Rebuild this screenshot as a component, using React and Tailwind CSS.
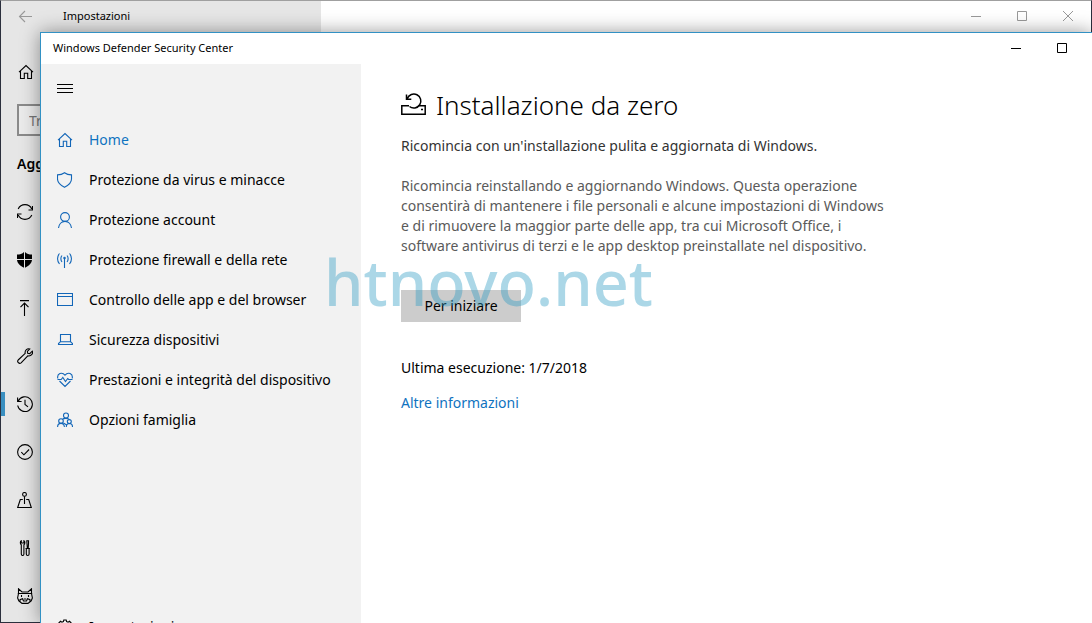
import { useState } from 'react';

const Icon = ({ size = 16, children }) => (
  <svg width={size} height={size} viewBox={`0 0 ${size} ${size}`} className="shrink-0" fill="none" stroke="currentColor" strokeWidth="1.1" aria-hidden="true">
    {children}
  </svg>
);

const HomeIcon = () => (
  <Icon>
    <path d="M1 8.2L8 1.5l7 6.7M2.5 7v7.5h3.8V9.2h3.4v5.3h3.8V7" />
  </Icon>
);

const railItems = [
  {
    label: 'Windows Update',
    icon: (
      <Icon>
        <path d="M1.2 5A7.5 7.5 0 0 1 14.8 5M14.8 11A7.5 7.5 0 0 1 1.2 11" />
        <path d="M15.5 2v4h-4M.5 14v-4h4" />
      </Icon>
    )
  },
  {
    label: 'Windows Defender',
    icon: (
      <Icon>
        <path
          fill="currentColor"
          stroke="none"
          d="M7 0v7H0V2.6C3 2.6 5.2 1.8 7 0zM8 0C9.8 1.8 12 2.6 15 2.6V7H8zM0 8h7v7.700C3.400 14 .4 11.500 0 8zM8 8h7c-.4 3.500-3.400 6-7 7.700z"
        />
      </Icon>
    )
  },
  {
    label: 'Backup',
    icon: (
      <Icon>
        <path d="M3 .6h9M7.500 3V16M3.500 7.200l4-4.200 4 4.200" />
      </Icon>
    )
  },
  {
    label: 'Risoluzione dei problemi',
    icon: (
      <Icon>
        <path d="M12.800 1C10.500 0 7.500 2 8.200 5.400L1.200 12c-1.600 1.900 1 4.400 2.900 2.800l6.700-7c3.300.8 5.500-2.200 4.500-4.700l-2.600 2.500-2-.3-.3-1.900z" />
      </Icon>
    )
  },
  {
    label: 'Ripristino',
    active: true,
    icon: (
      <Icon>
        <path d="M1.300 5A7.400 7.400 0 1 1 .7 9.500M.6 1.500v4h4M8 3.800v4.700l3 2.400" />
      </Icon>
    )
  },
  {
    label: 'Attivazione',
    icon: (
      <Icon>
        <circle cx="8" cy="8" r="7.4" />
        <path d="M4.300 8.200l2.600 2.600 5.200-5.300" />
      </Icon>
    )
  },
  {
    label: 'Trova il mio dispositivo',
    icon: (
      <Icon>
        <circle cx="7.5" cy="2.4" r="1.9" />
        <path d="M7.500 4.300V12M5.800 7.500H3.300L.7 15.500h13.600l-2.600-8H9.200" />
      </Icon>
    )
  },
  {
    label: 'Per sviluppatori',
    icon: (
      <Icon>
        <path d="M4.300.8C3 1.300 3 4 4.300 4.800v9.200c0 2 2.600 2 2.600 0V4.800C8.200 4 8.200 1.300 6.900.8v2.200H4.300zM9.800.8h1.700v2.700l-.3 4.300h-.9l-.3-4.300zM8.500 8.500h4.400M9.300 8.500V14c0 1.900 2.800 1.900 2.800 0V8.500" />
      </Icon>
    )
  },
  {
    label: 'Programma Windows Insider',
    icon: (
      <Icon>
        <path d="M1.500 5.500V.8L5 4h6L14.500.8v4.700M.8 5.500h14.400" />
        <path d="M1.500 5.500L.6 10l1.200 2.800L5 15.400h6l3.200-2.600 1.200-2.800-.9-4.500" />
        <path d="M4.500 7v2M11.500 7v2M3 13.500v-1.800l2.500-.9 1 2.200h3l1-2.200 2.500.9v1.800M6.800 11h2.400" />
      </Icon>
    )
  }
];

const navItems = [
  { label: 'Home', icon: <HomeIcon /> },
  {
    label: 'Protezione da virus e minacce',
    icon: (
      <Icon>
        <path d="M7.500.8C9.400 2.200 12 2.900 14.500 2.900V7c0 3.800-3.200 6.400-7 8.300C3.700 13.400.5 10.800.5 7V2.900C3 2.900 5.600 2.200 7.500.8z" />
      </Icon>
    )
  },
  {
    label: 'Protezione account',
    icon: (
      <Icon>
        <circle cx="8" cy="5" r="4.4" />
        <path d="M1.500 16c.4-3.600 2.900-6.600 6.500-6.600s6.100 3 6.500 6.600" />
      </Icon>
    )
  },
  {
    label: 'Protezione firewall e della rete',
    icon: (
      <Icon>
        <path d="M7.500 6v10M5 3.500c-1.500 1.700-1.500 4.800 0 6.500M10 3.500c1.500 1.700 1.500 4.800 0 6.500M2.500 1.500c-2.600 3-2.600 7.500 0 10.500M12.500 1.500c2.600 3 2.600 7.500 0 10.500" />
        <circle cx="7.5" cy="6" r=".7" />
      </Icon>
    )
  },
  {
    label: 'Controllo delle app e del browser',
    icon: (
      <Icon>
        <path d="M.5 1.500h15v12H.5zM.5 4.500h15" />
      </Icon>
    )
  },
  {
    label: 'Sicurezza dispositivi',
    icon: (
      <Icon>
        <path d="M3.500 2.500h10v7.300h-10zM3.300 9.800L1.500 11.500v1h14v-1l-1.800-1.700" />
      </Icon>
    )
  },
  {
    label: 'Prestazioni e integrità del dispositivo',
    icon: (
      <Icon>
        <path d="M.8 6.500C-.3 1.500 5 -.5 8 3.200c3-3.700 8.300-1.700 7.200 3.300M2.500 9L8 14.500 13.500 9M.5 7.500h3.700l1.600-2 2.700 4 2.200-3 1 1h3.800" />
      </Icon>
    )
  },
  {
    label: 'Opzioni famiglia',
    icon: (
      <Icon>
        <circle cx="9" cy="3.5" r="2.5" />
        <circle cx="4" cy="9" r="2.3" />
        <circle cx="12.3" cy="9.6" r="2" />
        <path d="M.6 15c0-4.800 6.800-4.800 6.800 0M9.300 15c0-4.600 6.200-4.600 6.200 0M5.600 7.300C6.500 6 11.500 6 12.300 7.600M6.400 11l3.300 2" />
      </Icon>
    )
  }
];

const MinimizeIcon = () => (
  <Icon size={10}>
    <path d="M0 5.500h10" strokeWidth="1" />
  </Icon>
);

const MaximizeIcon = () => (
  <Icon size={10}>
    <path d="M.5.5h9v9h-9z" strokeWidth="1" />
  </Icon>
);

const CloseIcon = () => (
  <Icon size={10}>
    <path d="M0 0l10 10M10 0L0 10" strokeWidth="1" />
  </Icon>
);

function WindowButton({ label, children }) {
  return (
    <button type="button" aria-label={label} className="w-[46px] h-[30px] flex items-center justify-center hover:bg-black/10">
      {children}
    </button>
  );
}

function SettingsWindow() {
  return (
    <div className="h-full flex flex-col bg-white border border-[#2b2f3d] border-t-[#a0a0a0]">
      <div className="flex flex-1 min-h-0">
        <aside className="w-80 shrink-0 bg-[#e6e6e6] flex flex-col">
          <header className="h-[31px] flex items-center pl-4">
            <button type="button" aria-label="Indietro" className="text-[#999999]">
              <Icon>
                <path d="M2 7.500h13M8 2L2.500 7.500 8 13" />
              </Icon>
            </button>
            <span className="ml-[30px] text-[11px]">Impostazioni</span>
          </header>
          <button type="button" aria-label="Pagina iniziale" className="h-20 flex items-center pl-[17px]">
            <HomeIcon />
          </button>
          <div className="-mt-2 px-4">
            <input
              type="text"
              aria-label="Trova un'impostazione"
              placeholder="Trova un'impostazione"
              className="w-full h-8 px-2.5 text-sm border-2 border-[#8a8a8a] bg-[#ebebeb] placeholder:text-[#767676]"
            />
          </div>
          <h2 className="h-12 mt-1 pl-4 flex items-center text-sm font-semibold">Aggiornamento e sicurezza</h2>
          <nav>
            {railItems.map((item) => (
              <button key={item.label} type="button" aria-label={item.label} className="w-full h-12 flex items-center">
                <span className={`w-1 h-6 mr-3 ${item.active ? 'bg-[#3a8fc0]' : ''}`}></span>
                {item.icon}
              </button>
            ))}
          </nav>
        </aside>
        <div className="flex-1 h-8 flex justify-end text-[#999999]">
          <WindowButton label="Riduci a icona"><MinimizeIcon /></WindowButton>
          <WindowButton label="Ingrandisci"><MaximizeIcon /></WindowButton>
          <WindowButton label="Chiudi"><CloseIcon /></WindowButton>
        </div>
      </div>
    </div>
  );
}

function Sidebar({ current, onSelect }) {
  return (
    <aside className="w-80 shrink-0 bg-[#f2f2f2] flex flex-col">
      <button type="button" aria-label="Menu" className="w-12 h-12 pl-4 flex items-center">
        <Icon>
          <path d="M0 4.500h16M0 8.500h16M0 12.500h16" strokeWidth="1" />
        </Icon>
      </button>
      <nav className="mt-2">
        {navItems.map((item) => (
          <button
            key={item.label}
            type="button"
            onClick={() => onSelect(item.label)}
            className={`w-full h-10 pl-4 flex items-center gap-4 text-sm ${current === item.label ? 'text-[#0f73c0]' : 'text-black'}`}
          >
            <span className="text-[#1266b8]">{item.icon}</span>
            {item.label}
          </button>
        ))}
      </nav>
      <button type="button" className="h-10 -mb-6 mt-auto pl-4 flex items-center gap-4 text-sm">
        <Icon>
          <path d="M6.800 1h2.400l.4 1.600 1.500.6 1.400-.9 1.600 1.600-.8 1.500.5 1.400 1.700.4v2.200l-1.700.5-.5 1.400.8 1.500-1.600 1.600-1.400-.8-1.500.6-.4 1.600H6.800l-.4-1.600-1.500-.6-1.400.8-1.600-1.600.8-1.500-.5-1.400L.5 9.400V7.200l1.700-.4.5-1.400-.8-1.500 1.600-1.600 1.400.9 1.500-.6z" />
          <circle cx="8" cy="8" r="2.5" />
        </Icon>
        Impostazioni
      </button>
    </aside>
  );
}

function FreshStart() {
  return (
    <main className="flex-1 min-w-0 pl-10 pr-4 pt-5 text-sm">
      <h1 className="h-11 flex items-center gap-2.5 text-[26px] font-light">
        <svg width="25" height="28" viewBox="0 0 25 28" className="shrink-0" fill="none" stroke="currentColor" strokeWidth="1.5" aria-hidden="true">
          <path d="M8 13.700H.8v8.500h23.400v-8.500H17.500" />
          <path d="M5.500 2.500v4.800h4.800M6.300 6.500A7 7 0 1 1 8.500 14.500" />
          <path d="M20 17.500h2" />
        </svg>
        Installazione da zero
      </h1>
      <p className="mt-2 leading-5 text-[#333333]">Ricomincia con un'installazione pulita e aggiornata di Windows.</p>
      <p className="mt-5 max-w-[490px] leading-5 text-[#5a5a5a]">
        Ricomincia reinstallando e aggiornando Windows. Questa operazione consentirà di mantenere i file personali e alcune impostazioni di Windows e di rimuovere la maggior parte delle app, tra cui Microsoft Office, i software antivirus di terzi e le app desktop preinstallate nel dispositivo.
      </p>
      <button type="button" className="mt-[34px] w-[120px] h-8 bg-[#cccccc] hover:bg-[#bbbbbb]">Per iniziare</button>
      <p className="mt-9 leading-5">Ultima esecuzione: 1/7/2018</p>
      <a href="#info" className="mt-[15px] block w-fit leading-5 text-[#0f73c0]">Altre informazioni</a>
    </main>
  );
}

function DefenderWindow() {
  const [current, setCurrent] = useState('Home');

  return (
    <div className="absolute left-10 top-8 right-0 bottom-0 flex flex-col bg-white border-l border-t border-[#3291c4] shadow-[0_0_18px_rgba(0,0,0,0.4)] overflow-hidden">
      <header className="h-[31px] shrink-0 flex items-center justify-between pl-3 pr-[7px]">
        <span className="text-[11px]">Windows Defender Security Center</span>
        <div className="h-full flex">
          <WindowButton label="Riduci a icona"><MinimizeIcon /></WindowButton>
          <WindowButton label="Ingrandisci"><MaximizeIcon /></WindowButton>
        </div>
      </header>
      <div className="flex flex-1 min-h-0">
        <Sidebar current={current} onSelect={setCurrent} />
        <FreshStart />
      </div>
    </div>
  );
}

export default function App() {
  return (
    <div className="relative h-screen overflow-hidden text-black font-['Noto_Sans','Open_Sans',sans-serif]">
      <SettingsWindow />
      <DefenderWindow />
      {/* Site watermark */}
      <div className="absolute left-[324px] top-[238px] text-[63px] leading-[88px] font-medium text-[#2d9bc4]/40 pointer-events-none">htnovo.net</div>
    </div>
  );
}
